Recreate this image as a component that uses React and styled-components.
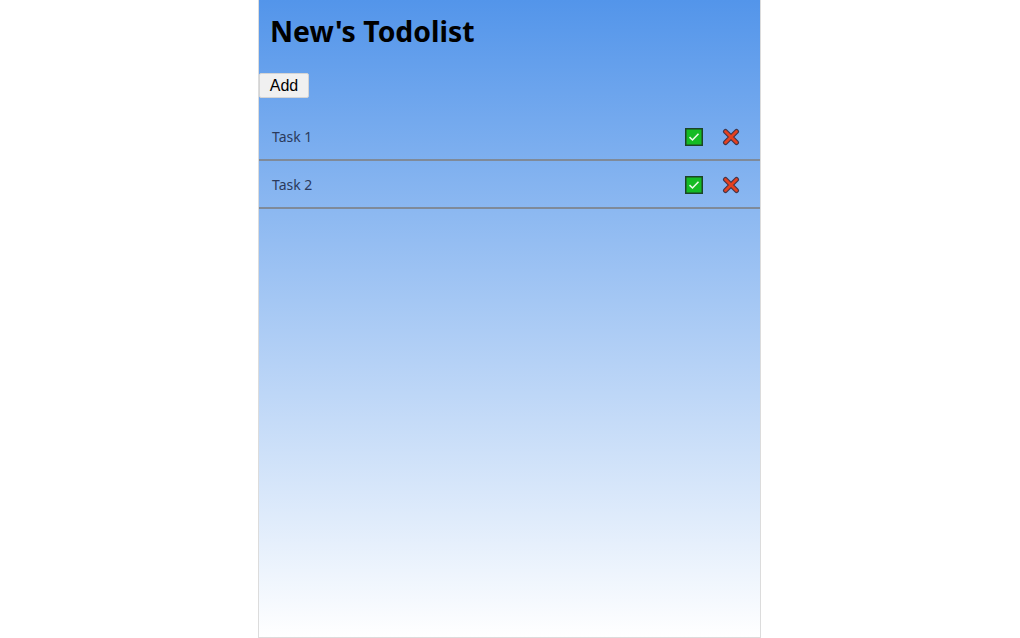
import React from "react";
import styled, { createGlobalStyle } from "styled-components";

const Global = createGlobalStyle`
  html, body { margin: 0; padding: 0; background: #fff; }
  body { font-family: "Noto Sans", "Open Sans", sans-serif; }
`;

const Page = styled.div`
  width: 1020px;
  height: 638px;
  padding-left: 258px;
  box-sizing: border-box;
  display: flex;
  overflow: hidden;
`;

const Panel = styled.div`
  width: 503px;
  height: 638px;
  box-sizing: border-box;
  border: 1px solid #dcdcdc;
  border-top: 0;
  background: linear-gradient(to bottom, #5395ea 0%, #ffffff 100%);
`;

const Title = styled.h1`
  margin: 0;
  padding: 12px 0 0 11px;
  height: 73px;
  box-sizing: border-box;
  font-size: 28.4px;
  line-height: 38px;
  font-weight: 700;
  color: #000;
`;

const AddButton = styled.button`
  display: block;
  width: 50px;
  height: 25px;
  padding: 0;
  background: #f0f0f0;
  border: 1px solid #d4d4d4;
  border-radius: 2px;
  font-family: "Liberation Sans", Arial, sans-serif;
  font-size: 16px;
  color: #000;
`;

const List = styled.ul`
  list-style: none;
  margin: 15px 0 0;
  padding: 0;
`;

const Row = styled.li`
  display: flex;
  align-items: center;
  height: 48px;
  box-sizing: border-box;
  padding: 0 20px 0 13px;
  border-bottom: 2px solid #7f8a99;
`;

const Label = styled.span`
  flex: 1;
  font-size: 14px;
  color: #2b3a5c;
`;

const Actions = styled.div`
  display: flex;
  align-items: center;
  gap: 19px;
  margin-top: 2px;
`;

const IconButton = styled.span`
  display: flex;
  width: 18px;
  height: 18px;
`;

const CheckIcon = () => (
  <svg width="18" height="18" viewBox="0 0 18 18">
    <rect x="0.75" y="0.75" width="16.5" height="16.5" fill="#14bb24" stroke="#1c4426" strokeWidth="1.5" />
    <path d="M4.5 9.2 L7.5 12 L13.5 5.8" fill="none" stroke="#eafbe8" strokeWidth="1.6" />
  </svg>
);

const CrossIcon = () => (
  <svg width="18" height="18" viewBox="0 0 18 18">
    <path d="M3.5 3.5 L14.5 14.5 M14.5 3.5 L3.5 14.5" stroke="#43354a" strokeWidth="5" strokeLinecap="round" />
    <path d="M3.5 3.5 L14.5 14.5 M14.5 3.5 L3.5 14.5" stroke="#e4401f" strokeWidth="2.8" strokeLinecap="round" />
  </svg>
);

const tasks = ["Task 1", "Task 2"];

export default function App() {
  return (
    <>
      <Global />
      <Page>
        <Panel>
          <Title>New's Todolist</Title>
          <AddButton>Add</AddButton>
          <List>
            {tasks.map((task) => (
              <Row key={task}>
                <Label>{task}</Label>
                <Actions>
                  <IconButton><CheckIcon /></IconButton>
                  <IconButton><CrossIcon /></IconButton>
                </Actions>
              </Row>
            ))}
          </List>
        </Panel>
      </Page>
    </>
  );
}
